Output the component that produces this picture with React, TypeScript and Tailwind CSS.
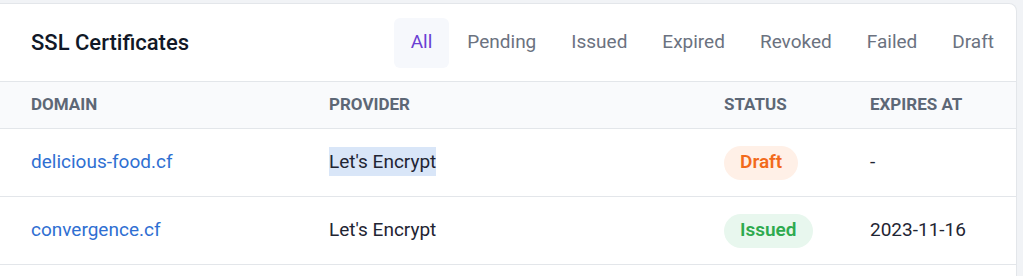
const tabs = ["All", "Pending", "Issued", "Expired", "Revoked", "Failed", "Draft"];

const rows = [
  { domain: "delicious-food.cf", provider: "Let's Encrypt", status: "Draft", expires: "-", selected: true },
  { domain: "convergence.cf", provider: "Let's Encrypt", status: "Issued", expires: "2023-11-16", selected: false },
];

function StatusBadge({ status }: { status: string }) {
  const cls =
    status === "Draft"
      ? "bg-[#fff0e7] text-[#f26a1b]"
      : "bg-[#e8f7ee] text-[#2eaa4f]";
  return (
    <span className={`inline-flex h-[34px] items-center rounded-full px-4 text-[19px] font-semibold ${cls}`}>
      {status}
    </span>
  );
}

export default function App() {
  return (
    <div className="min-h-screen bg-[#f1f3f6] pt-[3px] font-['Roboto',sans-serif]">
      <div className="w-[1017px] overflow-hidden rounded-tr-lg border border-l-0 border-[#e3e6ea] bg-white">
        {/* Header */}
        <div className="flex h-[78px] items-center justify-between border-b border-[#e3e6ea] pl-[31px] pr-[5px]">
          <h2 className="text-[22px] font-medium text-[#111827]">SSL Certificates</h2>
          <div className="flex items-center gap-px">
            {tabs.map((t) => (
              <button
                key={t}
                className={`h-[50px] rounded-md px-[17px] text-[19px] ${
                  t === "All" ? "bg-[#f6f8fc] text-[#6b3fd3]" : "text-[#6b7280]"
                }`}
              >
                {t}
              </button>
            ))}
          </div>
        </div>

        {/* Table head */}
        <div className="grid h-[47px] grid-cols-[329px_395px_146px_1fr] items-center border-b border-[#e3e6ea] bg-[#f9fafc] text-[17px] font-bold uppercase text-[#5d6776]">
          <div className="pl-[31px]">Domain</div>
          <div>Provider</div>
          <div>Status</div>
          <div>Expires At</div>
        </div>

        {/* Rows */}
        {rows.map((r) => (
          <div
            key={r.domain}
            className="grid h-[68px] grid-cols-[329px_395px_146px_1fr] items-center border-b border-[#e3e6ea] text-[19px] text-[#1f2533]"
          >
            <div className="pl-[31px]">
              <a className="text-[#2f6fd2]">{r.domain}</a>
            </div>
            <div>
              <span className={r.selected ? "bg-[#d9e6f8] py-[3px]" : ""}>{r.provider}</span>
            </div>
            <div>
              <StatusBadge status={r.status} />
            </div>
            <div>{r.expires}</div>
          </div>
        ))}
        <div className="h-10" />
      </div>
    </div>
  );
}
